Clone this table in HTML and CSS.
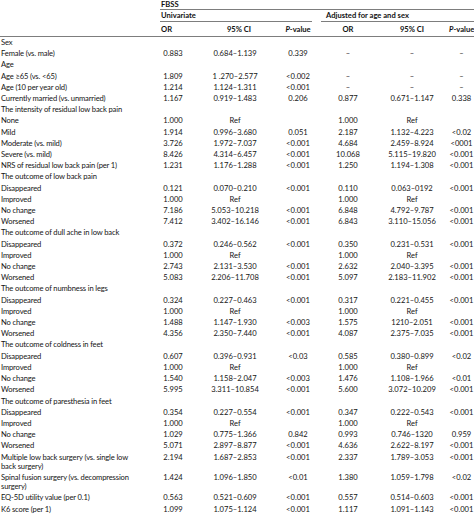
FILE: index.html
```html
<!DOCTYPE html>
<html>
<head>
<meta charset="utf-8">
<link rel="stylesheet" href="styles.css">
</head>
<body>
<table class="t">
<colgroup>
<col class="c-lab"><col class="c-or1"><col class="c-ci1"><col class="c-p1"><col class="c-gap"><col class="c-or2"><col class="c-ci2"><col class="c-p2">
</colgroup>
<thead>
<tr class="h1"><th></th><th colspan="7" class="ln hl">FBSS</th></tr>
<tr class="h2"><th></th><th colspan="3" class="ln hl">Univariate</th><th></th><th colspan="3" class="ln hl adj">Adjusted for age and sex</th></tr>
<tr class="h3"><th class="ln"></th><th class="ln hl">OR</th><th class="ln ci1h">95% CI</th><th class="ln"><i>P</i>-value</th><th class="ln"></th><th class="ln">OR</th><th class="ln">95% CI</th><th class="ln"><i>P</i>-value</th></tr>
</thead>
<tbody>
<tr><td>Sex</td><td></td><td></td><td></td><td></td><td></td><td></td><td></td></tr>
<tr><td>Female (vs. male)</td><td>0.883</td><td>0.684–1.139</td><td>0.339</td><td></td><td>–</td><td>–</td><td>–</td></tr>
<tr><td>Age</td><td></td><td></td><td></td><td></td><td></td><td></td><td></td></tr>
<tr><td>Age ≥65 (vs. &lt;65)</td><td>1.809</td><td>1 .270–2.577</td><td>&lt;0.002</td><td></td><td>–</td><td>–</td><td>–</td></tr>
<tr><td>Age (10 per year old)</td><td>1.214</td><td>1.124–1.311</td><td>&lt;0.001</td><td></td><td>–</td><td>–</td><td>–</td></tr>
<tr><td>Currently married (vs. unmarried)</td><td>1.167</td><td>0.919–1.483</td><td>0.206</td><td></td><td>0.877</td><td>0.671–1.147</td><td>0.338</td></tr>
<tr><td>The intensity of residual low back pain</td><td></td><td></td><td></td><td></td><td></td><td></td><td></td></tr>
<tr><td>None</td><td>1.000</td><td>Ref</td><td></td><td></td><td>1.000</td><td>Ref</td><td></td></tr>
<tr><td>Mild</td><td>1.914</td><td>0.996–3.680</td><td>0.051</td><td></td><td>2.187</td><td>1.132–4.223</td><td>&lt;0.02</td></tr>
<tr><td>Moderate (vs. mild)</td><td>3.726</td><td>1.972–7.037</td><td>&lt;0.001</td><td></td><td>4.684</td><td>2.459–8.924</td><td>&lt;0001</td></tr>
<tr><td>Severe (vs. mild)</td><td>8.426</td><td>4.314–6.457</td><td>&lt;0.001</td><td></td><td>10.068</td><td>5.115–19.820</td><td>&lt;0.001</td></tr>
<tr><td>NRS of residual low back pain (per 1)</td><td>1.231</td><td>1.176–1.288</td><td>&lt;0.001</td><td></td><td>1.250</td><td>1.194–1.308</td><td>&lt;0.001</td></tr>
<tr><td>The outcome of low back pain</td><td></td><td></td><td></td><td></td><td></td><td></td><td></td></tr>
<tr><td>Disappeared</td><td>0.121</td><td>0.070–0.210</td><td>&lt;0.001</td><td></td><td>0.110</td><td>0.063–0192</td><td>&lt;0.001</td></tr>
<tr><td>Improved</td><td>1.000</td><td>Ref</td><td></td><td></td><td>1.000</td><td>Ref</td><td></td></tr>
<tr><td>No change</td><td>7.186</td><td>5.053–10.218</td><td>&lt;0.001</td><td></td><td>6.848</td><td>4.792–9.787</td><td>&lt;0.001</td></tr>
<tr><td>Worsened</td><td>7.412</td><td>3.402–16.146</td><td>&lt;0.001</td><td></td><td>6.843</td><td>3.110–15.056</td><td>&lt;0.001</td></tr>
<tr><td>The outcome of dull ache in low back</td><td></td><td></td><td></td><td></td><td></td><td></td><td></td></tr>
<tr><td>Disappeared</td><td>0.372</td><td>0.246–0.562</td><td>&lt;0.001</td><td></td><td>0.350</td><td>0.231–0.531</td><td>&lt;0.001</td></tr>
<tr><td>Improved</td><td>1.000</td><td>Ref</td><td></td><td></td><td>1.000</td><td>Ref</td><td></td></tr>
<tr><td>No change</td><td>2.743</td><td>2.131–3.530</td><td>&lt;0.001</td><td></td><td>2.632</td><td>2.040–3.395</td><td>&lt;0.001</td></tr>
<tr><td>Worsened</td><td>5.083</td><td>2.206–11.708</td><td>&lt;0.001</td><td></td><td>5.097</td><td>2.183–11.902</td><td>&lt;0.001</td></tr>
<tr><td>The outcome of numbness in legs</td><td></td><td></td><td></td><td></td><td></td><td></td><td></td></tr>
<tr><td>Disappeared</td><td>0.324</td><td>0.227–0.463</td><td>&lt;0.001</td><td></td><td>0.317</td><td>0.221–0.455</td><td>&lt;0.001</td></tr>
<tr><td>Improved</td><td>1.000</td><td>Ref</td><td></td><td></td><td>1.000</td><td>Ref</td><td></td></tr>
<tr><td>No change</td><td>1.488</td><td>1.147–1.930</td><td>&lt;0.003</td><td></td><td>1.575</td><td>1210–2.051</td><td>&lt;0.001</td></tr>
<tr><td>Worsened</td><td>4.356</td><td>2.350–7.440</td><td>&lt;0.001</td><td></td><td>4.087</td><td>2.375–7.035</td><td>&lt;0.001</td></tr>
<tr><td>The outcome of coldness in feet</td><td></td><td></td><td></td><td></td><td></td><td></td><td></td></tr>
<tr><td>Disappeared</td><td>0.607</td><td>0.396–0.931</td><td>&lt;0.03</td><td></td><td>0.585</td><td>0.380–0.899</td><td>&lt;0.02</td></tr>
<tr><td>Improved</td><td>1.000</td><td>Ref</td><td></td><td></td><td>1.000</td><td>Ref</td><td></td></tr>
<tr><td>No change</td><td>1.540</td><td>1.158–2.047</td><td>&lt;0.003</td><td></td><td>1.476</td><td>1.108–1.966</td><td>&lt;0.01</td></tr>
<tr><td>Worsened</td><td>5.995</td><td>3.311–10.854</td><td>&lt;0.001</td><td></td><td>5.600</td><td>3.072–10.209</td><td>&lt;0.001</td></tr>
<tr><td>The outcome of paresthesia in feet</td><td></td><td></td><td></td><td></td><td></td><td></td><td></td></tr>
<tr><td>Disappeared</td><td>0.354</td><td>0.227–0.554</td><td>&lt;0.001</td><td></td><td>0.347</td><td>0.222–0.543</td><td>&lt;0.001</td></tr>
<tr><td>Improved</td><td>1.000</td><td>Ref</td><td></td><td></td><td>1.000</td><td>Ref</td><td></td></tr>
<tr><td>No change</td><td>1.029</td><td>0.775–1.366</td><td>0.842</td><td></td><td>0.993</td><td>0.746–1320</td><td>0.959</td></tr>
<tr><td>Worsened</td><td>5.071</td><td>2.897–8.877</td><td>&lt;0.001</td><td></td><td>4.636</td><td>2.622–8.197</td><td>&lt;0.001</td></tr>
<tr><td>Multiple low back surgery (vs. single low<br>back surgery)</td><td>2.194</td><td>1.687–2.853</td><td>&lt;0.001</td><td></td><td>2.337</td><td>1.789–3.053</td><td>&lt;0.001</td></tr>
<tr><td>Spinal fusion surgery (vs. decompression<br>surgery)</td><td>1.424</td><td>1.096–1.850</td><td>&lt;0.01</td><td></td><td>1.380</td><td>1.059–1.798</td><td>&lt;0.02</td></tr>
<tr><td>EQ-5D utility value (per 0.1)</td><td>0.563</td><td>0.521–0.609</td><td>&lt;0.001</td><td></td><td>0.557</td><td>0.514–0.603</td><td>&lt;0.001</td></tr>
<tr><td>K6 score (per 1)</td><td>1.099</td><td>1.075–1.124</td><td>&lt;0.001</td><td></td><td>1.117</td><td>1.091–1.143</td><td>&lt;0.001</td></tr>
</tbody>
</table>
</body>
</html>
```

FILE: styles.css
```css
html, body {
  margin: 0;
  padding: 0;
  background: #ffffff;
  overflow: hidden;
}

.t {
  border-collapse: separate;
  border-spacing: 0;
  table-layout: fixed;
  width: 474px;
  font-family: Lato, "Open Sans", sans-serif;
  font-size: 7.6px;
  color: #151515;
}

.c-lab { width: 160px; }
.c-or1 { width: 26px; }
.c-ci1 { width: 98px; }
.c-p1 { width: 28px; }
.c-gap { width: 9px; }
.c-or2 { width: 54px; }
.c-ci2 { width: 74px; }
.c-p2 { width: 25px; }

.t th {
  font-weight: 700;
  color: #111111;
  padding: 0;
  text-align: center;
  white-space: nowrap;
  vertical-align: middle;
}

.t th.hl { text-align: left; padding-left: 1px; }
.t th.adj { padding-left: 5px; }
.t th.ci1h { padding-left: 8px; }
.t th i { font-style: italic; }

.t th.ln { border-bottom: 1px solid #7d7d7d; }

.h1 th { line-height: 9px; height: 9px; }
.h2 th { line-height: 11px; height: 11px; }
.h3 th { line-height: 14px; height: 14px; }

.t td {
  padding: 1px 0;
  line-height: 9.2px;
  text-align: center;
  vertical-align: top;
  white-space: nowrap;
}

.t td:first-child {
  text-align: left;
  padding-left: 1px;
  letter-spacing: -0.15px;
}
```
